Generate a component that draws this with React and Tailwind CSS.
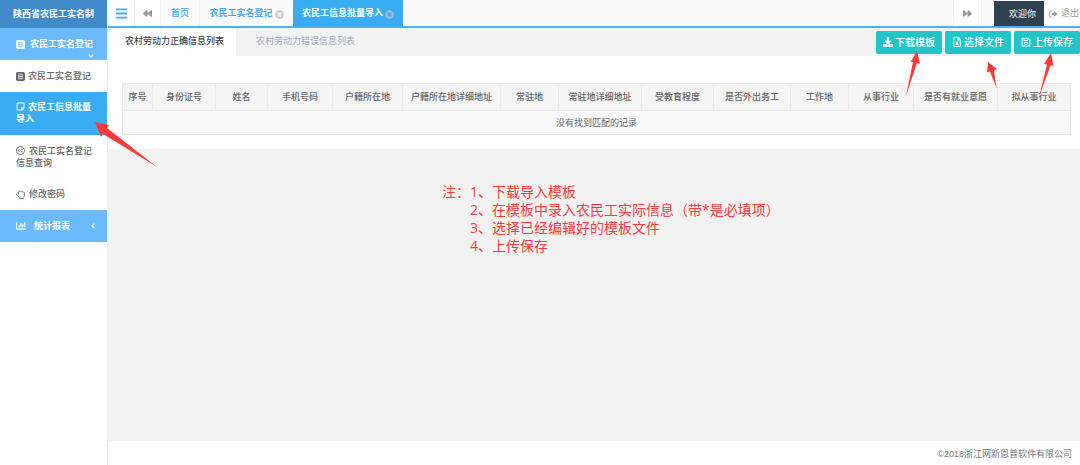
import React from 'react'
import {
  FaAngleDown,
  FaAngleLeft,
  FaBackward,
  FaBars,
  FaChartBar,
  FaCreativeCommons,
  FaDownload,
  FaForward,
  FaRegFileExcel,
  FaRegSave,
  FaRegStickyNote,
  FaTimesCircle,
} from 'react-icons/fa'

const columns = [
  { name: '序号', width: 'w-[30px]' },
  { name: '身份证号', width: 'w-[63px]' },
  { name: '姓名', width: 'w-[52px]' },
  { name: '手机号码', width: 'w-[65px]' },
  { name: '户籍所在地', width: 'w-[70px]' },
  { name: '户籍所在地详细地址', width: 'w-[98px]' },
  { name: '常驻地', width: 'w-[58px]' },
  { name: '常驻地详细地址', width: 'w-[83px]' },
  { name: '受教育程度', width: 'w-[72px]' },
  { name: '是否外出务工', width: 'w-[77px]' },
  { name: '工作地', width: 'w-[58px]' },
  { name: '从事行业', width: 'w-[65px]' },
  { name: '是否有就业意愿', width: 'w-[84px]' },
  { name: '拟从事行业', width: 'w-[73px]' },
]

const CardIcon = ({ line }) => (
  <svg viewBox="0 0 16 16" className="w-[9px] h-[9px] shrink-0" fill="none">
    <rect x="0" y="0" width="16" height="16" rx="3" fill="currentColor" />
    <path d="M5 4h6v8H5zM5 8h6" stroke={line} strokeWidth="1.4" />
  </svg>
)

const SignOutIcon = () => (
  <svg viewBox="0 0 16 14" className="w-[9px] h-2" fill="none" stroke="currentColor">
    <path d="M6 1.5H3A2 2 0 0 0 1 3.500v7a2 2 0 0 0 2 2h3" strokeWidth="1.600" />
    <path d="M5 5h4V2l6.500 5L9 12V9H5z" fill="currentColor" stroke="none" />
  </svg>
)

const FistIcon = () => (
  <svg
    viewBox="0 0 18 18"
    className="w-[9px] h-[9px] shrink-0"
    fill="none"
    stroke="currentColor"
    strokeWidth="1.5"
    strokeLinejoin="round"
  >
    <path d="M5 6V4.500a1.500 1.500 0 0 1 3-.8a1.500 1.500 0 0 1 3 .2a1.500 1.500 0 0 1 3 1a1.500 1.500 0 0 1 3 1.300V10c0 2-1 3-1.500 4.500L15 17H7v-2L2 11c-1.500-1.500-1-3.500 0-4.500c1-1 2.500-1 3-.5v3" />
  </svg>
)

const Sidebar = () => (
  <nav className="w-[107px] shrink-0 bg-white text-[9px] leading-3 text-[#666]">
    <h1 className="h-[28px] flex items-center justify-center bg-[#428bca] text-white font-bold">
      陕西省农民工实名制
    </h1>
    <a href="#register" className="relative h-8 pl-4 flex items-center gap-[5px] bg-[#6bbafd] text-white font-bold whitespace-nowrap">
      <CardIcon line="#6bbafd" />
      农民工实名登记
      <FaAngleDown className="absolute right-3 bottom-0 text-[8px]" />
    </a>
    <a href="#register-list" className="h-8 pl-4 flex items-center gap-[3px] font-medium">
      <CardIcon line="#fff" />
      农民工实名登记
    </a>
    <a href="#import" className="block pl-4 pr-3 pt-[9px] pb-[10px] bg-[#38adf4] text-white font-bold">
      <FaRegStickyNote className="inline-block align-[-1px] mr-[3px] text-[9px]" />
      农民工信息批量导入
    </a>
    <a href="#query" className="block pl-4 pr-3 pt-[10px] pb-[9px] font-medium">
      <FaCreativeCommons className="inline-block align-[-1px] mr-1 text-[9px]" />
      农民工实名登记信息查询
    </a>
    <a href="#password" className="h-8 pl-4 flex items-center gap-1 font-medium">
      <FistIcon />
      修改密码
    </a>
    <a href="#report" className="h-8 pl-4 pr-2.5 flex items-center gap-2 bg-[#6bbafd] text-white font-bold">
      <FaChartBar className="text-[10px]" />
      统计报表
      <FaAngleLeft className="ml-auto text-[8px]" />
    </a>
  </nav>
)

const TopBar = () => (
  <header className="h-[28px] flex items-stretch bg-[#fafafa] border-b-2 border-[#4fb0ea] text-[9px] text-[#999]">
    <button aria-label="菜单" className="w-[26px] flex items-center justify-center bg-white text-[#38adf4]">
      <FaBars className="text-[13px]" />
    </button>
    <button aria-label="向左" className="w-[27px] flex items-center justify-center bg-white border-x border-[#f0f0f0]">
      <FaBackward />
    </button>
    <a href="#home" className="w-[39px] pt-0.5 flex items-center justify-center text-[#4ba9e8] font-medium border-r border-[#f0f0f0]">
      首页
    </a>
    <a href="#register-list" className="w-[93px] pt-0.5 flex items-center justify-center gap-0.5 text-[#4ba9e8] font-bold">
      农民工实名登记
      <FaTimesCircle className="text-[#ccc]" />
    </a>
    <a href="#import" className="w-[110px] pt-0.5 flex items-center justify-center gap-0.5 bg-[#38adf4] text-white font-bold">
      农民工信息批量导入
      <FaTimesCircle className="text-[#a9bccb]" />
    </a>
    <div className="ml-auto flex">
      <button aria-label="向右" className="w-[29px] flex items-center justify-center bg-white border-x border-[#f0f0f0]">
        <FaForward />
      </button>
      <span className="w-3 bg-[#fafafa]" />
      <span className="w-[50px] mt-px pt-0.5 flex items-center justify-end pr-2 bg-[#2f4050] text-white">
        欢迎你
      </span>
      <a href="#logout" className="w-9 pt-0.5 pr-px flex items-center justify-end gap-[3px] bg-white">
        <SignOutIcon />
        退出
      </a>
    </div>
  </header>
)

const ActionButton = ({ icon, children }) => (
  <button className="h-[23px] px-[7px] flex items-center gap-0.5 rounded-xs bg-[#23c6c8] text-white text-[10px] font-medium">
    {icon}
    {children}
  </button>
)

const RecordTable = () => (
  <table className="w-full table-fixed border border-[#e4e4e4] text-[9px] leading-3 text-[#666]">
    <thead>
      <tr className="h-[27px] bg-[#f4f4f4]">
        {columns.map((col) => (
          <th key={col.name} className={`${col.width} p-0 border border-[#e9e9e9] font-medium text-center whitespace-nowrap`}>
            {col.name}
          </th>
        ))}
      </tr>
    </thead>
    <tbody>
      <tr className="h-6 bg-[#f9f9f9]">
        <td colSpan={columns.length} className="p-0 text-center">
          没有找到匹配的记录
        </td>
      </tr>
    </tbody>
  </table>
)

const App = () => {
  return (
    <div className="relative min-h-screen flex bg-white font-['Liberation_Sans','Noto_Sans_CJK_SC',sans-serif]">
      <Sidebar />

      <div className="relative flex-1 min-w-0 flex flex-col border-l border-[#eee]">
        <TopBar />

        {/* Tabs and actions */}
        <div className="h-7 flex items-stretch bg-[#f2f2f2] text-[9px]">
          <button className="pl-[17px] pr-3 bg-white text-[#444] font-medium">农村劳动力正确信息列表</button>
          <button className="px-5 text-[#a0a9b8]">农村劳动力错误信息列表</button>
          <div className="ml-auto flex items-center gap-[3px]">
            <ActionButton icon={<FaDownload />}>下载模板</ActionButton>
            <ActionButton icon={<FaRegFileExcel />}>选择文件</ActionButton>
            <ActionButton icon={<FaRegSave />}>上传保存</ActionButton>
          </div>
        </div>

        <div className="pt-[27px] pb-[14px] pl-[14px] pr-[9px] bg-white">
          <RecordTable />
        </div>

        {/* Notes */}
        <main className="flex-1 bg-[#f2f2f2] pt-[34px] px-4">
          <div className="ml-[318px] flex text-[14px] leading-[18px] text-[#fb3a3e] font-['Open_Sans','Noto_Sans_CJK_SC',sans-serif]">
            <span>注：</span>
            <ol>
              <li>1、下载导入模板</li>
              <li>2、在模板中录入农民工实际信息（带*是必填项）</li>
              <li>3、选择已经编辑好的模板文件</li>
              <li>4、上传保存</li>
            </ol>
          </div>
        </main>

        <footer className="h-6 px-2 pt-1 flex items-center justify-end bg-white text-[9px] text-[#777]">
          ©2018浙江网新恩普软件有限公司
        </footer>

        {/* Arrows to the action buttons */}
        <svg
          viewBox="0 0 180 50"
          className="absolute right-0 top-[50px] w-[180px] h-[50px] pointer-events-none"
          fill="#fa3a3a"
        >
          <path d="M17 1L10.500 12L13 12L6 46L17 13L20 13.500Z" />
          <path d="M88 12L87 22.500L90 21.500L96.500 38L94 20.500L97 19Z" />
          <path d="M151 3L144 14L147 14.500L139 47L150.500 15.500L153.500 16Z" />
        </svg>
      </div>

      {/* Arrow to the import entry */}
      <svg
        viewBox="0 0 64 48"
        className="absolute left-[94px] top-[121px] w-[64px] h-[48px] pointer-events-none"
        fill="#fa3a3a"
      >
        <path d="M1 1L15 4L13 7L63 46L9 13L7 16Z" />
      </svg>
    </div>
  )
}

export default App
